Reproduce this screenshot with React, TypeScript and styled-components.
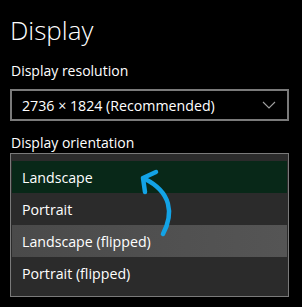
import React from "react";
import styled, { createGlobalStyle } from "styled-components";

const GlobalStyle = createGlobalStyle`
  html, body {
    margin: 0;
    padding: 0;
    background: #000000;
  }
  body {
    font-family: "Open Sans", "Noto Sans", sans-serif;
    color: #ffffff;
  }
`;

const orientations = [
  { id: "landscape", label: "Landscape", state: "selected" },
  { id: "portrait", label: "Portrait", state: "none" },
  { id: "landscape-flipped", label: "Landscape (flipped)", state: "hover" },
  { id: "portrait-flipped", label: "Portrait (flipped)", state: "none" },
] as const;

type RowState = (typeof orientations)[number]["state"];

export default function App() {
  return (
    <Page>
      <GlobalStyle />
      <Title>Display</Title>

      <Label>Display resolution</Label>
      <Select>
        <SelectText>2736 × 1824 (Recommended)</SelectText>
        <Chevron viewBox="0 0 14 8">
          <path d="M1 1 L7 7 L13 1" />
        </Chevron>
      </Select>

      <Label>Display orientation</Label>
      <Flyout>
        {orientations.map((item) => (
          <Option key={item.id} state={item.state}>
            {item.label}
          </Option>
        ))}
        {/* arrow drawn in page coordinates, shifted by the flyout's padding box */}
        <Arrow viewBox="0 0 302 307">
          <path d="M163 234 C174 213, 171 192, 145 179" />
          <path d="M143 178 L156 172 M143 178 L145 192" />
        </Arrow>
      </Flyout>
    </Page>
  );
}

const Page = styled.div`
  width: 302px;
  height: 307px;
  padding: 1px 13px 0 10px;
  box-sizing: border-box;
  overflow: hidden;
`;

const Title = styled.h1`
  margin: 11px 0 0;
  font-size: 26px;
  font-weight: 300;
  line-height: 36px;
  color: #ffffff;
`;

const Label = styled.div`
  font-size: 14px;
  line-height: 20px;
  color: #ffffff;
  margin-top: 13px;
  padding-left: 1px;
`;

const Select = styled.div`
  margin-top: 8px;
  margin-bottom: -1px;
  height: 32px;
  box-sizing: border-box;
  border: 2px solid #7a7a7a;
  display: flex;
  align-items: center;
  justify-content: space-between;
  padding: 0 10px;
`;

const SelectText = styled.span`
  font-size: 14.2px;
  color: #ffffff;
`;

const Chevron = styled.svg`
  width: 14px;
  height: 8px;
  margin-right: 1px;
  fill: none;
  stroke: #a0a0a0;
  stroke-width: 1.1;
`;

const Flyout = styled.div`
  position: relative;
  border: 1px solid #7a7a7a;
  background: #2b2b2b;
  padding: 7px 1px;
  display: flex;
  flex-direction: column;
  height: 144px;
  box-sizing: border-box;
`;

const rowBackground: Record<RowState, string> = {
  selected: "#082818",
  hover: "linear-gradient(90deg, #4a4a4a 0%, #555555 100%)",
  none: "transparent",
};

const Option = styled.div<{ state: RowState }>`
  height: 32px;
  flex-shrink: 0;
  display: flex;
  align-items: center;
  padding-left: 10px;
  font-size: 14.2px;
  color: #ffffff;
  background: ${(p) => rowBackground[p.state]};
`;

const Arrow = styled.svg`
  position: absolute;
  left: -11px;
  top: -154px;
  width: 302px;
  height: 307px;
  fill: none;
  stroke: #13a3e6;
  stroke-width: 4.5;
  stroke-linecap: round;
  stroke-linejoin: round;
  pointer-events: none;
`;
